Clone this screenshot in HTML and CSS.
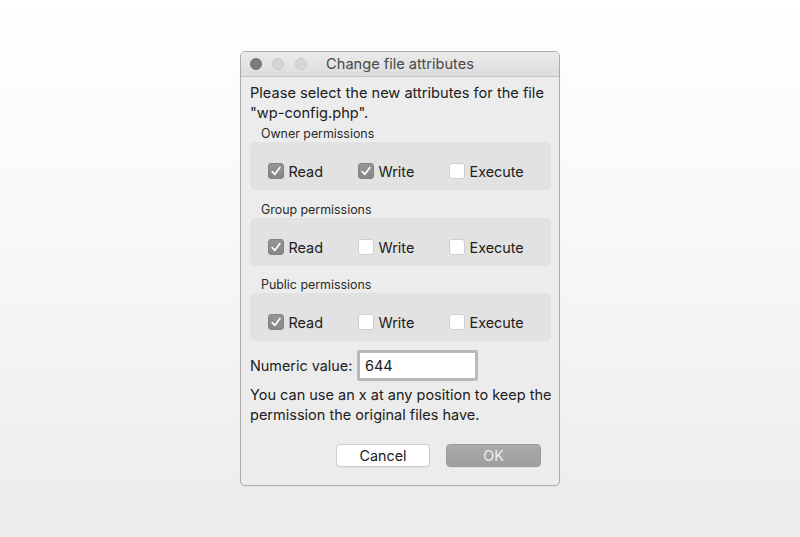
FILE: index.html
```html
<!DOCTYPE html>
<html lang="en">
<head>
<meta charset="utf-8">
<title>Change file attributes</title>
<link rel="stylesheet" href="styles.css">
</head>
<body>
<div class="stage">
  <div class="window">
    <div class="titlebar">
      <div class="lights">
        <span class="light light-close"></span>
        <span class="light"></span>
        <span class="light"></span>
      </div>
      <div class="title">Change file attributes</div>
    </div>
    <div class="content">
      <p class="intro">Please select the new attributes for the file<br>"wp-config.php".</p>

      <section class="group">
        <div class="group-label">Owner permissions</div>
        <div class="group-box">
          <label class="opt"><span class="cb cb-on"><svg viewBox="0 0 16 16" width="16" height="16"><path d="M4.2 8.6 L6.9 11.3 L11.9 4.6" /></svg></span><span class="opt-text">Read</span></label>
          <label class="opt"><span class="cb cb-on"><svg viewBox="0 0 16 16" width="16" height="16"><path d="M4.2 8.6 L6.9 11.3 L11.9 4.6" /></svg></span><span class="opt-text">Write</span></label>
          <label class="opt"><span class="cb"></span><span class="opt-text">Execute</span></label>
        </div>
      </section>

      <section class="group">
        <div class="group-label">Group permissions</div>
        <div class="group-box">
          <label class="opt"><span class="cb cb-on"><svg viewBox="0 0 16 16" width="16" height="16"><path d="M4.2 8.6 L6.9 11.3 L11.9 4.6" /></svg></span><span class="opt-text">Read</span></label>
          <label class="opt"><span class="cb"></span><span class="opt-text">Write</span></label>
          <label class="opt"><span class="cb"></span><span class="opt-text">Execute</span></label>
        </div>
      </section>

      <section class="group">
        <div class="group-label">Public permissions</div>
        <div class="group-box">
          <label class="opt"><span class="cb cb-on"><svg viewBox="0 0 16 16" width="16" height="16"><path d="M4.2 8.6 L6.9 11.3 L11.9 4.6" /></svg></span><span class="opt-text">Read</span></label>
          <label class="opt"><span class="cb"></span><span class="opt-text">Write</span></label>
          <label class="opt"><span class="cb"></span><span class="opt-text">Execute</span></label>
        </div>
      </section>

      <div class="numeric">
        <span class="numeric-label">Numeric value:</span>
        <div class="numeric-input">644</div>
      </div>

      <p class="help">You can use an x at any position to keep the<br>permission the original files have.</p>

      <div class="buttons">
        <button class="btn" type="button">Cancel</button>
        <button class="btn btn-ok" type="button">OK</button>
      </div>
    </div>
  </div>
</div>
</body>
</html>
```

FILE: styles.css
```css
* { box-sizing: border-box; }

html, body {
  margin: 0;
  padding: 0;
}

body {
  width: 800px;
  height: 537px;
  overflow: hidden;
  background: linear-gradient(180deg, #ffffff 0%, #f8f8f8 45%, #ececec 100%);
  font-family: Inter, "Liberation Sans", Arial, sans-serif;
  color: #202020;
}

.stage {
  padding-top: 51px;
  display: flex;
  justify-content: center;
}

.window {
  width: 320px;
  height: 435px;
  border: 1px solid #ababab;
  border-radius: 5px;
  background: #ececec;
  box-shadow: 0 1px 2px rgba(0, 0, 0, 0.06);
  overflow: hidden;
  display: flex;
  flex-direction: column;
}

.titlebar {
  position: relative;
  height: 25px;
  flex: none;
  background: linear-gradient(180deg, #ebebeb 0%, #dcdcdc 100%);
  border-bottom: 1px solid #c4c4c4;
  display: flex;
  align-items: center;
}

.lights {
  display: flex;
  gap: 10.5px;
  padding-left: 8.5px;
}

.light {
  width: 12px;
  height: 12px;
  border-radius: 50%;
  background: #d6d6d6;
  border: 1px solid #c8c8c8;
}

.light-close {
  background: #7c7c7c;
  border-color: #6f6f6f;
}

.title {
  position: absolute;
  left: 0;
  right: 0;
  top: 0;
  height: 24px;
  line-height: 24px;
  text-align: center;
  font-size: 14.6px;
  color: #484848;
}

.content {
  flex: 1;
  padding: 6px 8px 0 9px;
}

.intro {
  margin: 0;
  font-size: 14.6px;
  line-height: 20px;
  white-space: nowrap;
}

.group {
  margin-top: 3px;
}

.group + .group {
  margin-top: 11.5px;
}

.group-label {
  padding-left: 11px;
  font-size: 12.4px;
  line-height: 16px;
  color: #2a2a2a;
}

.group-box {
  height: 48px;
  background: #e2e2e2;
  border-radius: 5px;
  padding: 20px 0 0 18px;
  display: grid;
  grid-template-columns: 90px 91px auto;
  align-items: start;
}

.opt {
  display: flex;
  align-items: center;
  gap: 4.5px;
  font-size: 14.4px;
  line-height: 16px;
  white-space: nowrap;
}

.opt-text {
  padding-top: 2px;
}

.cb {
  width: 16px;
  height: 16px;
  flex: none;
  border-radius: 3px;
  background: #ffffff;
  border: 1px solid #cfcfcf;
  display: flex;
}

.cb-on {
  background: linear-gradient(180deg, #959595 0%, #878787 100%);
  border-color: #828282;
}

.cb svg {
  display: block;
  margin: -1px;
}

.cb svg path {
  fill: none;
  stroke: #ffffff;
  stroke-width: 1.7;
  stroke-linecap: round;
  stroke-linejoin: round;
}

.numeric {
  margin-top: 9px;
  display: grid;
  grid-template-columns: 107px 121px;
  align-items: center;
  height: 31px;
}

.numeric-label {
  font-size: 14.4px;
  line-height: 20px;
  white-space: nowrap;
}

.numeric-input {
  height: 31px;
  border: 3px solid #b9b9b9;
  border-radius: 2px;
  background: #ffffff;
  padding-left: 5px;
  font-size: 14.5px;
  line-height: 25px;
}

.help {
  margin: 4px 0 0 0;
  font-size: 14.5px;
  line-height: 20px;
  white-space: nowrap;
}

.buttons {
  margin-top: 19px;
  padding-right: 10px;
  display: flex;
  justify-content: flex-end;
  gap: 16px;
}

.btn {
  height: 23px;
  width: 94px;
  padding: 0;
  border: 1px solid #cdcdcd;
  border-radius: 4px;
  background: #ffffff;
  font-family: Inter, "Liberation Sans", Arial, sans-serif;
  font-size: 14.3px;
  line-height: 21px;
  color: #202020;
  box-shadow: 0 0.5px 0 rgba(0, 0, 0, 0.08);
}

.btn-ok {
  width: 95px;
  border-color: #9a9a9a;
  background: linear-gradient(180deg, #aaaaaa 0%, #9e9e9e 100%);
  color: #f0f0f0;
}
```
